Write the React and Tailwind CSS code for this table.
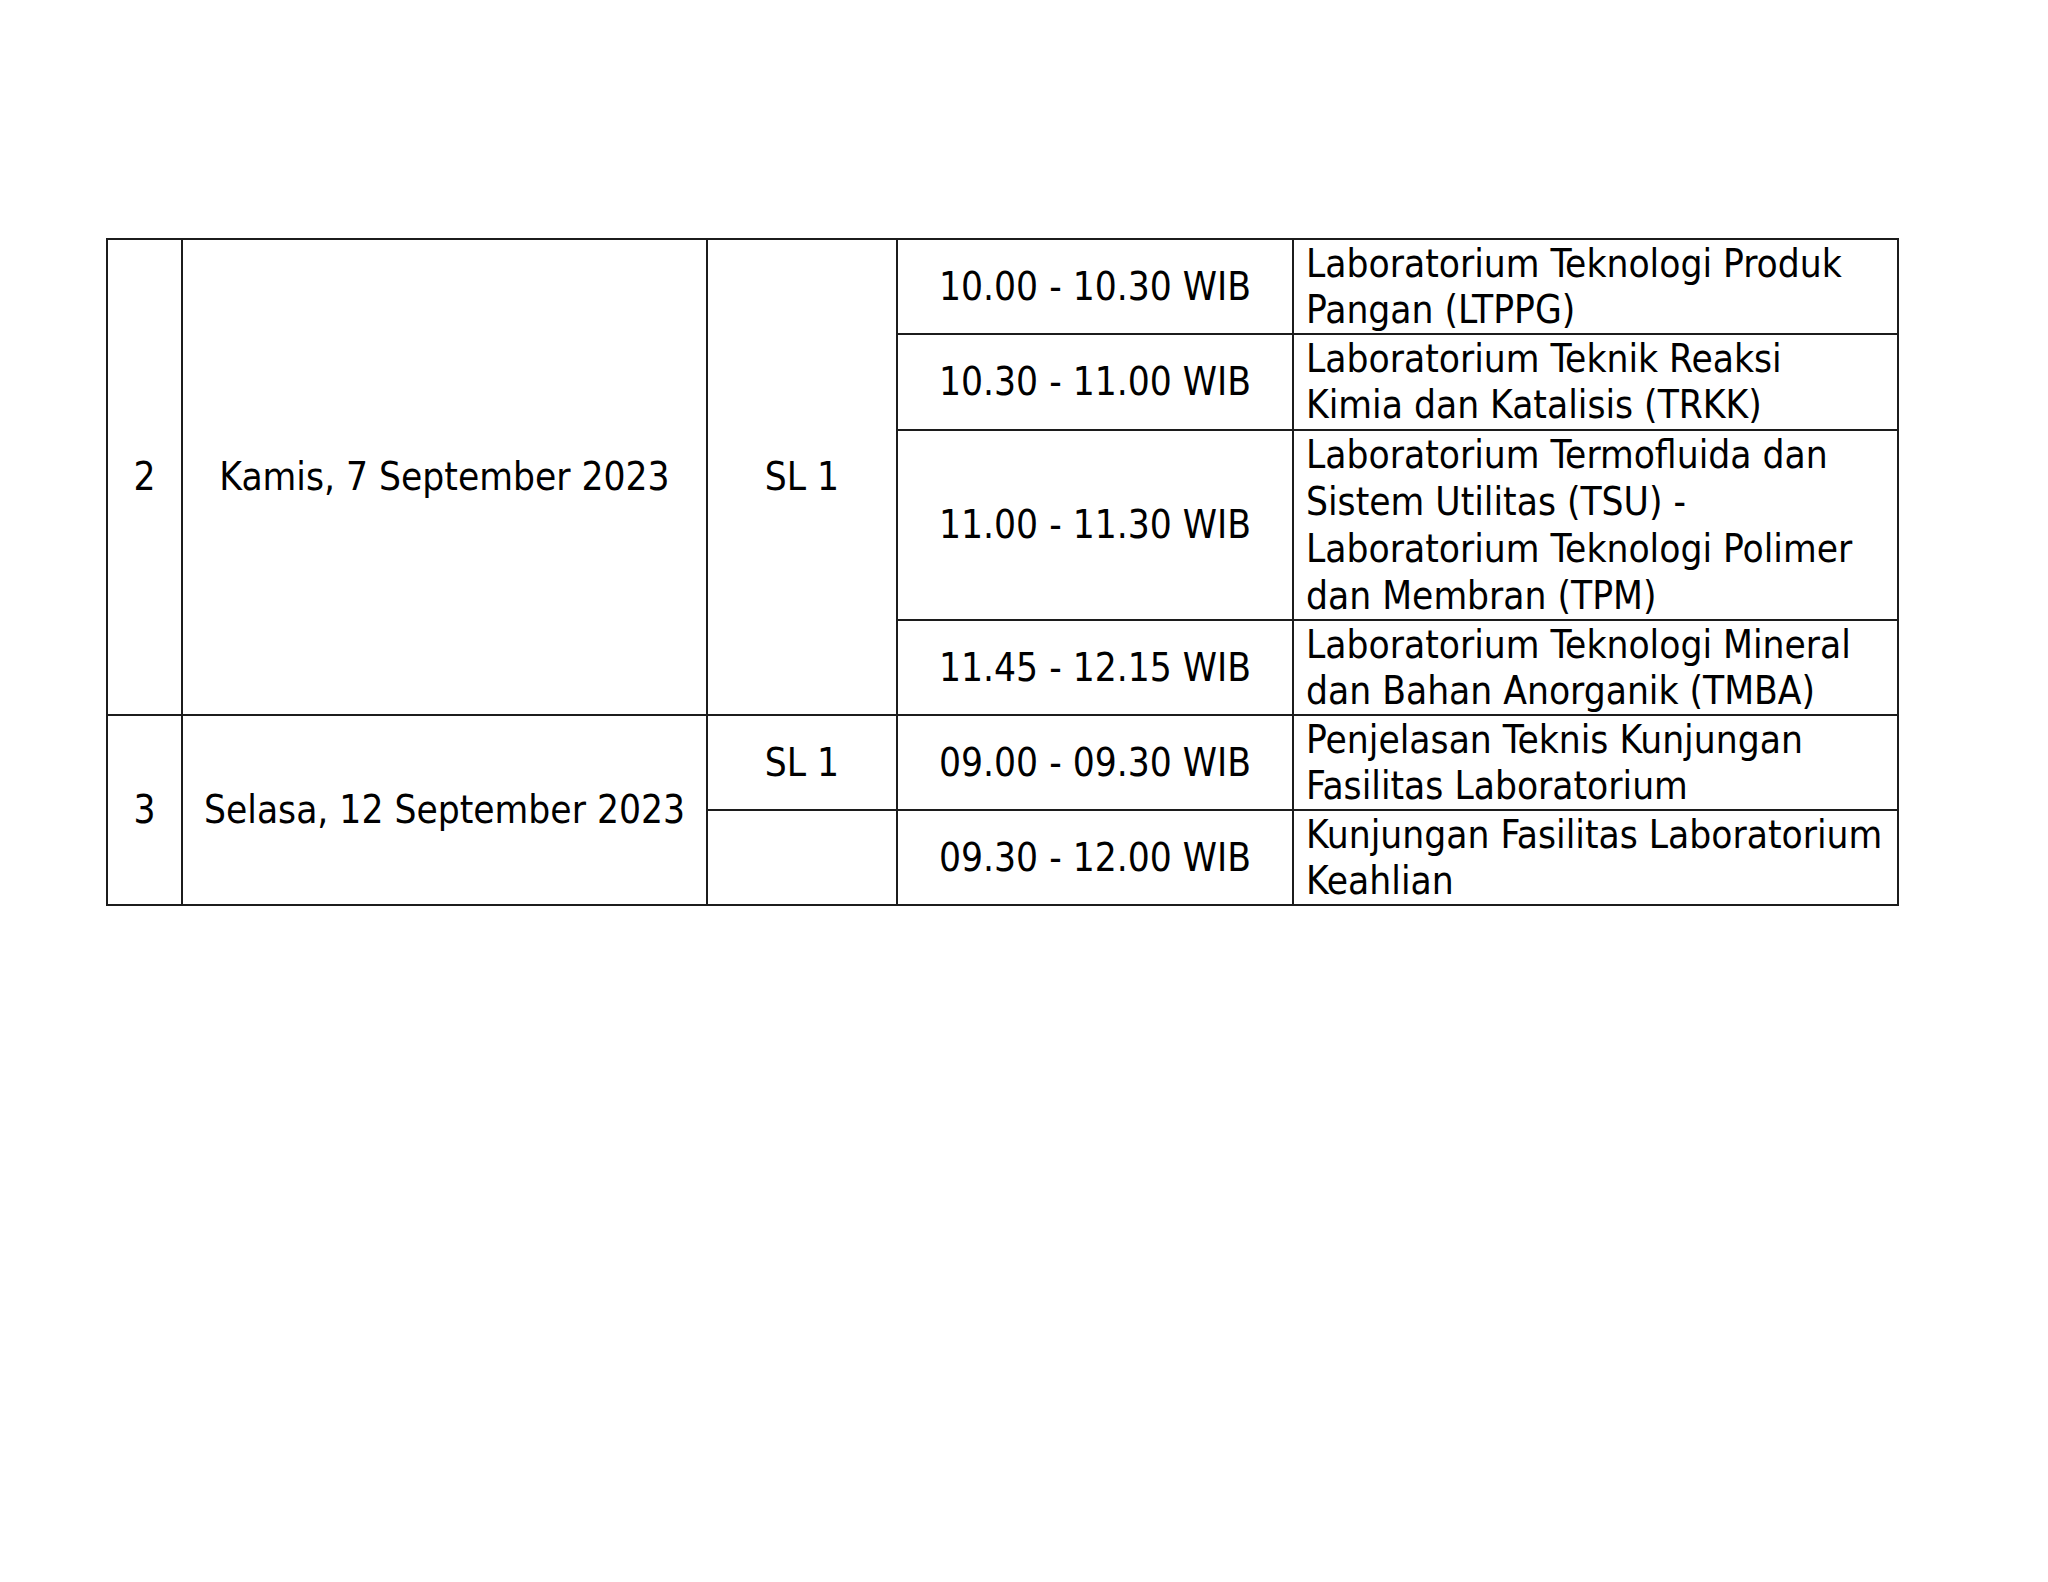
import React from "react";

const cell = "border-2 border-[#1c1c1c] align-middle";
const desc = `${cell} pl-[12px] pr-[4px] whitespace-nowrap`;

export default function App() {
  return (
    <div className="w-[2048px] h-[1582px] bg-white text-black" style={{ fontFamily: '"DejaVu Sans Condensed", "DejaVu Sans", sans-serif' }}>
      <div className="pt-[238px] pl-[106px]">
        <table className="border-collapse table-fixed text-[38.5px] leading-[46px] w-[1791px]">
          <colgroup>
            <col className="w-[75px]" />
            <col className="w-[525px]" />
            <col className="w-[190px]" />
            <col className="w-[396px]" />
            <col className="w-[605px]" />
          </colgroup>
          <tbody>
            <tr className="h-[95px]">
              <td rowSpan={4} className={`${cell} text-center`}>2</td>
              <td rowSpan={4} className={`${cell} text-center`}>Kamis, 7 September 2023</td>
              <td rowSpan={4} className={`${cell} text-center`}>SL 1</td>
              <td className={`${cell} text-center`}>10.00 - 10.30 WIB</td>
              <td className={desc}>Laboratorium Teknologi Produk<br />Pangan (LTPPG)</td>
            </tr>
            <tr className="h-[96px]">
              <td className={`${cell} text-center`}>10.30 - 11.00 WIB</td>
              <td className={desc}>Laboratorium Teknik Reaksi<br />Kimia dan Katalisis (TRKK)</td>
            </tr>
            <tr className="h-[189px]">
              <td className={`${cell} text-center`}>11.00 - 11.30 WIB</td>
              <td className={`${desc} leading-[47px]`}>Laboratorium Termofluida dan<br />Sistem Utilitas (TSU) -<br />Laboratorium Teknologi Polimer<br />dan Membran (TPM)</td>
            </tr>
            <tr className="h-[95px]">
              <td className={`${cell} text-center`}>11.45 - 12.15 WIB</td>
              <td className={desc}>Laboratorium Teknologi Mineral<br />dan Bahan Anorganik (TMBA)</td>
            </tr>
            <tr className="h-[95px]">
              <td rowSpan={2} className={`${cell} text-center`}>3</td>
              <td rowSpan={2} className={`${cell} text-center`}>Selasa, 12 September 2023</td>
              <td className={`${cell} text-center`}>SL 1</td>
              <td className={`${cell} text-center`}>09.00 - 09.30 WIB</td>
              <td className={desc}>Penjelasan Teknis Kunjungan<br />Fasilitas Laboratorium</td>
            </tr>
            <tr className="h-[95px]">
              <td className={cell}></td>
              <td className={`${cell} text-center`}>09.30 - 12.00 WIB</td>
              <td className={desc}>Kunjungan Fasilitas Laboratorium<br />Keahlian</td>
            </tr>
          </tbody>
        </table>
      </div>
    </div>
  );
}
